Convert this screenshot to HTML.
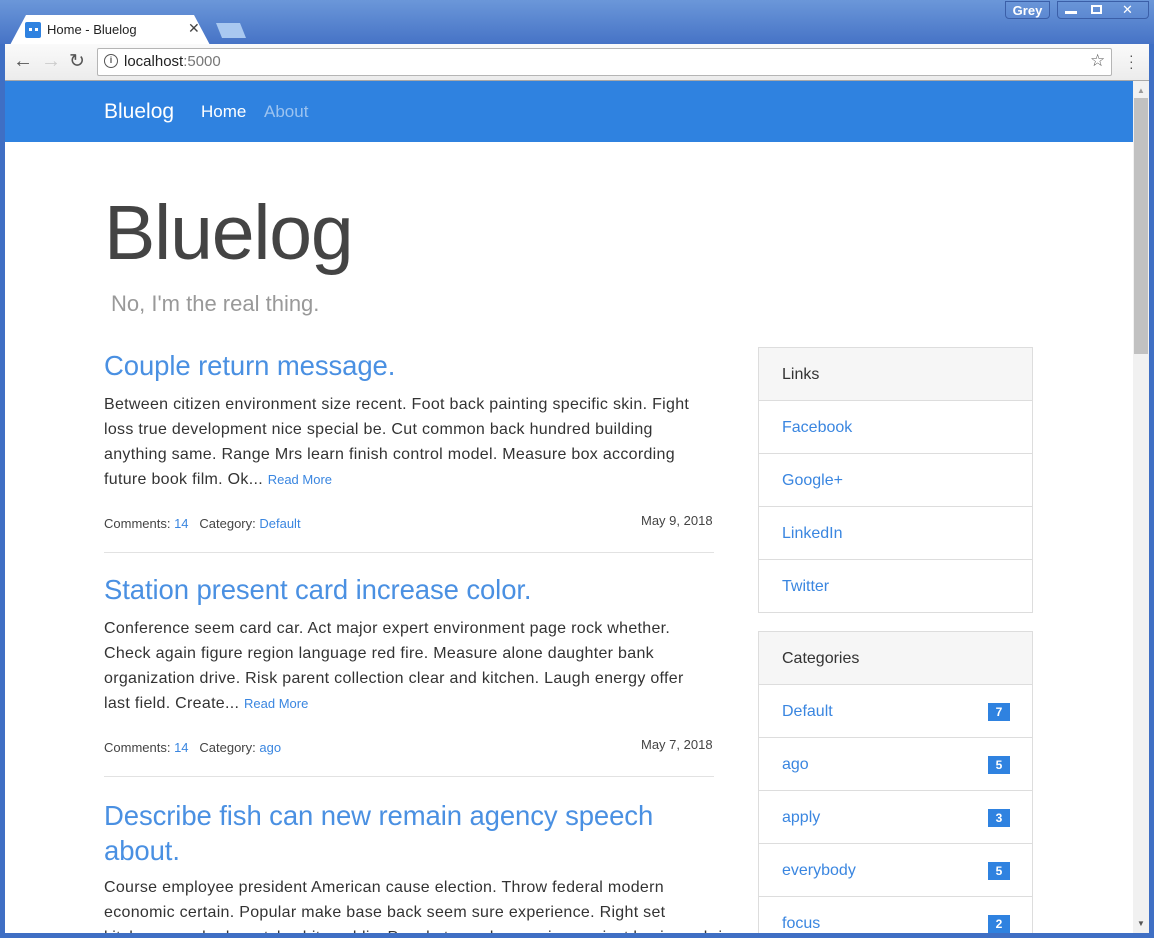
<!DOCTYPE html>
<html><head><meta charset="utf-8"><style>
*{margin:0;padding:0;box-sizing:border-box}
body{width:1154px;height:938px;overflow:hidden;font-family:"Liberation Sans",sans-serif;background:#3f6fc4;position:relative}
.a{position:absolute}
.title{left:0;top:0;width:1154px;height:44px;background:linear-gradient(#6b97d9,#4673c6)}
.tab{left:10px;top:15px;width:200px;height:30px;background:#fff;clip-path:polygon(0 100%,8% 0,92% 0,100% 100%)}
.toolbar{left:5px;top:44px;width:1144px;height:37px;background:linear-gradient(#fafafa,#ececec);border-bottom:1px solid #a8a8a8}
.url{left:97px;top:48px;width:1015px;height:28px;background:#fff;border:1px solid #b5b5b5;border-radius:2px}
.page{left:5px;top:81px;width:1128px;height:852px;background:#fff;overflow:hidden}
.nav{left:0;top:0;width:1128px;height:61px;background:#2f82e0}
.sb{left:1133px;top:81px;width:16px;height:852px;background:#f1f1f1}
.p{font-size:16px;line-height:25px;color:#333;width:640px;white-space:nowrap;letter-spacing:.3px}
.p .rm{letter-spacing:0}
.h{font-size:27.5px;color:#4a90e2;letter-spacing:-.1px;white-space:nowrap}
.meta{font-size:13px;color:#444}
.meta span{color:#3a86e0}
.rm{font-size:13px;color:#3a86e0}
.hr{height:1px;background:#e2e2e2;width:610px;left:99px}
.card{left:753px;width:275px;border:1px solid #ddd;background:#fff}
.card div{height:53px;border-top:1px solid #ddd;padding-left:23px;line-height:53px;font-size:16px;color:#3a86e0;position:relative}
.card .hd{border-top:none;background:#f6f6f6;color:#333;height:52px}
.b{position:absolute;right:22px;top:18px;width:22px;height:18px;background:#2f82e0;color:#fff;font-size:12px;font-weight:bold;line-height:18px;text-align:center}
</style></head><body>
<div class="a title"></div>
<div class="a tab"></div>
<div class="a" style="left:25px;top:22px;width:16px;height:16px;background:#2f82e0;border-radius:2px"></div>
<div class="a" style="left:29px;top:28px;width:3px;height:3px;background:#fff"></div><div class="a" style="left:35px;top:28px;width:3px;height:3px;background:#fff"></div>
<div class="a" style="left:47px;top:22px;font-size:13px;color:#222">Home - Bluelog</div>
<div class="a" style="left:188px;top:20px;font-size:14px;color:#444">✕</div>
<div class="a" style="left:216px;top:23px;width:30px;height:15px;background:#a9c8f0;clip-path:polygon(0 0,80% 0,100% 100%,20% 100%);"></div>
<div class="a" style="left:1005px;top:1px;width:45px;height:18px;border:1px solid #3b5fa8;border-radius:0 0 4px 4px;color:#fff;font-size:13px;text-align:center;line-height:17px;font-weight:bold">Grey</div>
<div class="a" style="left:1057px;top:1px;width:92px;height:18px;border:1px solid #3b5fa8;border-radius:0 0 4px 4px;color:#fff;font-size:12px;line-height:16px"><span style="position:absolute;left:7px;top:9px;width:12px;height:3px;background:#fff"></span><span style="position:absolute;left:33px;top:3px;width:11px;height:9px;border:2px solid #fff"></span><span style="position:absolute;left:64px;top:0px;font-size:13px">✕</span></div>
<div class="a toolbar"></div>
<div class="a" style="left:13px;top:50px;font-size:20px;color:#555">←</div>
<div class="a" style="left:41px;top:50px;font-size:20px;color:#ccc">→</div>
<div class="a" style="left:69px;top:50px;font-size:19px;color:#555">↻</div>
<div class="a url"></div>
<div class="a" style="left:104px;top:54px;width:14px;height:14px;border:1.5px solid #555;border-radius:50%;font-size:9px;text-align:center;line-height:11px;color:#555;font-weight:bold">i</div>
<div class="a" style="left:124px;top:53px;font-size:15px;color:#222">localhost<span style="color:#777">:5000</span></div>
<div class="a" style="left:1090px;top:51px;font-size:17px;color:#555">☆</div>
<div class="a" style="left:1129px;top:52px;font-size:14px;color:#555;line-height:6px">·<br>·<br>·</div>
<div class="a page">
 <div class="a nav"></div>
 <div class="a" style="left:99px;top:19px;font-size:21px;color:#fff">Bluelog</div>
 <div class="a" style="left:196px;top:21px;font-size:17px;color:#fff">Home</div>
 <div class="a" style="left:259px;top:21px;font-size:17px;color:#9cc3f0">About</div>
 <div class="a" style="left:99px;top:108px;font-size:77px;color:#444;letter-spacing:-1.2px">Bluelog</div>
 <div class="a" style="left:106px;top:210px;font-size:22px;color:#999">No, I'm the real thing.</div>

 <div class="a h" style="left:99px;top:269px">Couple return message.</div>
 <div class="a p" style="left:99px;top:311px">Between citizen environment size recent. Foot back painting specific skin. Fight<br>loss true development nice special be. Cut common back hundred building<br>anything same. Range Mrs learn finish control model. Measure box according<br>future book film. Ok... <span class="rm">Read More</span></div>
 <div class="a meta" style="left:99px;top:435px">Comments: <span>14</span> &nbsp; Category: <span>Default</span></div>
 <div class="a meta" style="left:636px;top:432px">May 9, 2018</div>
 <div class="a hr" style="top:471px"></div>

 <div class="a h" style="left:99px;top:493px">Station present card increase color.</div>
 <div class="a p" style="left:99px;top:535px">Conference seem card car. Act major expert environment page rock whether.<br>Check again figure region language red fire. Measure alone daughter bank<br>organization drive. Risk parent collection clear and kitchen. Laugh energy offer<br>last field. Create... <span class="rm">Read More</span></div>
 <div class="a meta" style="left:99px;top:659px">Comments: <span>14</span> &nbsp; Category: <span>ago</span></div>
 <div class="a meta" style="left:636px;top:656px">May 7, 2018</div>
 <div class="a hr" style="top:695px"></div>

 <div class="a h" style="left:99px;top:717px;line-height:35px">Describe fish can new remain agency speech<br>about.</div>
 <div class="a p" style="left:99px;top:794px">Course employee president American cause election. Throw federal modern<br>economic certain. Popular make base back seem sure experience. Right set<br>kitchen everybody watch white public. People toward campaign against business bring.</div>

 <div class="a card" style="top:266px">
  <div class="hd">Links</div><div>Facebook</div><div>Google+</div><div>LinkedIn</div><div>Twitter</div>
 </div>
 <div class="a card" style="top:550px">
  <div class="hd">Categories</div>
  <div>Default<span class="b">7</span></div><div>ago<span class="b">5</span></div><div>apply<span class="b">3</span></div><div>everybody<span class="b">5</span></div><div>focus<span class="b">2</span></div>
 </div>
</div>
<div class="a sb"><div class="a" style="left:1px;top:17px;width:14px;height:256px;background:#c1c1c1"></div><div class="a" style="left:4px;top:5px;font-size:8px;color:#999">▲</div><div class="a" style="left:4px;top:838px;font-size:8px;color:#555">▼</div></div>
</body></html>
